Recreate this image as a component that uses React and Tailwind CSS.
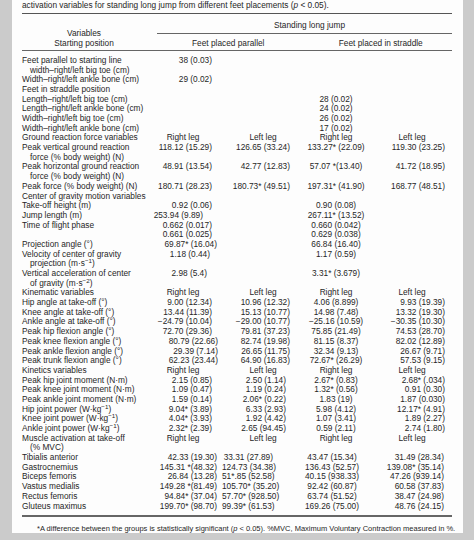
const font = { fontFamily: '"Liberation Sans", Arial, sans-serif' }

const LEGS = ['Right leg', 'Left leg', 'Right leg', 'Left leg']

const rows = [
  { l: 'Feet parallel to starting line', v: ['38 (0.03)'] },
  { l: 'width–right/left big toe (cm)', i: true },
  { l: 'Width–right/left ankle bone (cm)', v: ['29 (0.02)'] },
  { l: 'Feet in straddle position' },
  { l: 'Length–right/left big toe (cm)', v: [null, null, '28 (0.02)'] },
  { l: 'Length–right/left ankle bone (cm)', v: [null, null, '24 (0.02)'] },
  { l: 'Width–right/left big toe (cm)', v: [null, null, '26 (0.02)'] },
  { l: 'Width–right/left ankle bone (cm)', v: [null, null, '17 (0.02)'] },
  { l: 'Ground reaction force variables', legs: true },
  { l: 'Peak vertical ground reaction', v: ['118.12 (15.29)', '126.65 (33.24)', '133.27* (22.09)', '119.30 (23.25)'] },
  { l: 'force (% body weight) (N)', i: true },
  { l: 'Peak horizontal ground reaction', v: ['48.91 (13.54)', '42.77 (12.83)', '57.07 *(13.40)', '41.72 (18.95)'] },
  { l: 'force (% body weight) (N)', i: true },
  { l: 'Peak force (% body weight) (N)', v: ['180.71 (28.23)', '180.73* (49.51)', '197.31* (41.90)', '168.77 (48.51)'] },
  { l: 'Center of gravity motion variables' },
  { l: 'Take-off height (m)', v: ['0.92 (0.06)', null, '0.90 (0.08)'] },
  { l: 'Jump length (m)', v: ['253.94 (9.89)', null, '267.11* (13.52)'], p1: 'pr-[19px]' },
  { l: 'Time of flight phase', v: ['0.662 (0.017)', null, '0.660 (0.042)'] },
  { l: '', v: ['0.661 (0.025)', null, '0.629 (0.038)'] },
  { l: 'Projection angle (°)', v: ['69.87* (16.04)', null, '66.84 (16.40)'], p1: 'pr-[5px]' },
  { l: 'Velocity of center of gravity', v: ['1.18 (0.44)', null, '1.17 (0.59)'], p1: 'pr-[12px]' },
  { l: <>projection (m·s<sup>−1</sup>)</>, i: true },
  { l: 'Vertical acceleration of center', v: ['2.98 (5.4)', null, '3.31* (3.679)'], p1: 'pr-[15px]' },
  { l: <>of gravity (m·s<sup>−2</sup>)</>, i: true },
  { l: 'Kinematic variables', legs: true },
  { l: 'Hip angle at take-off (°)', v: ['9.00 (12.34)', '10.96 (12.32)', '4.06 (8.899)', '9.93 (19.39)'] },
  { l: 'Knee angle at take-off (°)', v: ['13.44 (11.39)', '15.13 (10.77)', '14.98 (7.48)', '13.32 (19.30)'] },
  { l: 'Ankle angle at take-off (°)', v: ['−24.79 (10.04)', '−29.00 (10.77)', '−25.16 (10.59)', '−30.35 (10.30)'] },
  { l: 'Peak hip flexion angle (°)', v: ['72.70 (29.36)', '79.81 (37.23)', '75.85 (21.49)', '74.53 (28.70)'] },
  { l: 'Peak knee flexion angle (°)', v: ['80.79 (22.66)', '82.74 (19.98)', '81.15 (8.37)', '82.02 (12.89)'], p1: 'pr-[4px]' },
  { l: 'Peak ankle flexion angle (°)', v: ['29.39 (7.14)', '26.65 (11.75)', '32.34 (9.13)', '26.67 (9.71)'], p1: 'pr-[4px]' },
  { l: 'Peak trunk flexion angle (°)', v: ['62.23 (23.44)', '64.90 (16.83)', '72.67* (26.29)', '57.53 (9.15)'], p1: 'pr-[4px]' },
  { l: 'Kinetics variables', legs: true },
  { l: 'Peak hip joint moment (N·m)', v: ['2.15 (0.85)', '2.50 (1.14)', '2.67* (0.83)', '2.68* (.034)'], k: true },
  { l: 'Peak knee joint moment (N·m)', v: ['1.09 (0.47)', '1.19 (0.24)', '1.32* (0.56)', '0.91 (0.30)'], k: true },
  { l: 'Peak ankle joint moment (N·m)', v: ['1.59 (0.14)', '2.06* (0.22)', '1.83 (19)', '1.87 (0.030)'], k: true },
  { l: <>Hip joint power (W·kg<sup>−1</sup>)</>, v: ['9.04* (3.89)', '6.33 (2.93)', '5.98 (4.12)', '12.17* (4.91)'], k: true },
  { l: <>Knee joint power (W·kg<sup>−1</sup>)</>, v: ['4.04* (3.93)', '1.92 (4.42)', '1.07 (3.41)', '1.89 (2.27)'], k: true },
  { l: <>Ankle joint power (W·kg<sup>−1</sup>)</>, v: ['2.32* (2.39)', '2.65 (94.45)', '0.59 (2.11)', '2.74 (1.80)'], k: true },
  { l: 'Muscle activation at take-off', legs: true },
  { l: '(% MVC)', i: true },
  { l: 'Tibialis anterior', v: ['42.33 (19.30)', '33.31 (27.89)', '43.47 (15.34)', '31.49 (28.34)'], m: true },
  { l: 'Gastrocnemius', v: ['145.31 *(48.32)', '124.73 (34.38)', '136.43 (52.57)', '139.08* (35.14)'], m: true },
  { l: 'Biceps femoris', v: ['26.84 (13.28)', '51*.85 (52.58)', '40.15 (938.33)', '47.26 (939.14)'], m: true },
  { l: 'Vastus medialis', v: ['149.28 *(81.49)', '105.70* (35.20)', '92.42 (60.87)', '60.58 (37.83)'], m: true },
  { l: 'Rectus femoris', v: ['94.84* (37.04)', '57.70* (928.50)', '63.74 (51.52)', '38.47 (24.98)'], m: true },
  { l: 'Gluteus maximus', v: ['199.70* (98.70)', '99.39* (61.53)', '169.26 (75.00)', '48.76 (24.15)'], m: true },
]

function Row({ r }) {
  const v = r.v || []
  const c1 = r.m ? 'pr-[5px]' : r.p1 || 'pr-[10px]'
  const c2 = r.m ? 'pr-[27px]' : r.k ? 'pr-[14px]' : 'pr-[10px]'
  const c3 = r.m ? 'pr-[8px]' : ''
  const c4 = r.m ? 'pr-[8px]' : 'pr-[7px]'
  return (
    <div className="grid grid-cols-[128px_72px_78px_72px_80px] h-[9.69px] leading-[9.69px] whitespace-nowrap">
      <div className={r.i ? 'pl-[8px]' : ''}>{r.l}</div>
      {r.legs ? (
        <>
          <div className="text-center pr-[6px]">{LEGS[0]}</div>
          <div className="text-center pl-[4px]">{LEGS[1]}</div>
          <div className="text-center">{LEGS[2]}</div>
          <div className="text-center">{LEGS[3]}</div>
        </>
      ) : (
        <>
          <div className={`text-right ${c1}`}>{v[0]}</div>
          <div className={`text-right ${c2}`}>{v[1]}</div>
          <div className={`text-center ${c3}`}>{v[2]}</div>
          <div className={`text-right ${c4}`}>{v[3]}</div>
        </>
      )}
    </div>
  )
}

export default function App() {
  return (
    <div className="w-[474px] h-[540px] bg-[#cbcbcb] overflow-hidden" style={font}>
      <div className="ml-[12px] w-[451px] h-[533px] bg-[#fdfdfd] pl-[10px] text-[8.3px] text-[#262626]">
        <div className="w-[430px]">
          {/* caption, cut by the top of the page */}
          <p className="pt-[0.5px] h-[9.69px] leading-[9.69px] whitespace-nowrap">
            activation variables for standing long jump from different feet placements (<i>p</i> &lt; 0.05).
          </p>
          <div className="mt-[3px] h-[1.5px] bg-[#555]" />

          {/* header */}
          <div className="flex h-[36.3px]">
            <div className="w-[124px] pt-[13.5px] flex flex-col items-center leading-[10.6px]">
              <span>Variables</span>
              <span>Starting position</span>
            </div>
            <div className="flex-1 ml-[11px] pt-[7.2px]">
              <div className="text-center pl-[10px] leading-[9.69px]">Standing long jump</div>
              <div className="mt-[1.5px] h-px bg-[#666]" />
              <div className="flex mt-[5.5px] leading-[9.69px]">
                <span className="flex-1 text-center">Feet placed parallel</span>
                <span className="flex-1 text-center pl-[10px]">Feet placed in straddle</span>
              </div>
            </div>
          </div>
          <div className="h-px bg-[#666]" />

          <div className="mt-[4.4px]">
            {rows.map((r, i) => <Row key={i} r={r} />)}
          </div>

          <div className="mt-[4px] h-[1.5px] bg-[#666]" />
          <p className="mt-[7px] pl-[15px] text-[7.5px] leading-[9px] whitespace-nowrap">
            *A difference between the groups is statistically significant (<i>p</i> &lt; 0.05). %MVC, Maximum Voluntary Contraction measured in %.
          </p>
        </div>
      </div>
    </div>
  )
}
